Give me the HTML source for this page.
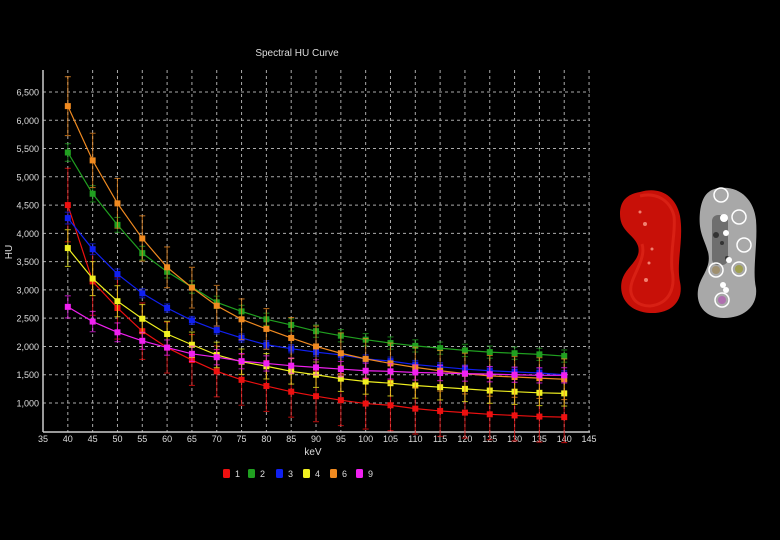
<!DOCTYPE html><html><head><meta charset="utf-8"><style>body{margin:0;background:#000;width:780px;height:540px;overflow:hidden}svg{display:block}text{font-family:"Liberation Sans",sans-serif}</style></head><body>
<svg id="s" width="780" height="540" viewBox="0 0 780 540">
<rect width="780" height="540" fill="#000"/>
<text x="297" y="56" fill="#ddd" font-size="10" text-anchor="middle">Spectral HU Curve</text>
<text x="12" y="252" fill="#ddd" font-size="10" text-anchor="middle" transform="rotate(-90 12 252)">HU</text>
<text x="313" y="455" fill="#ddd" font-size="10" text-anchor="middle">keV</text>
<g id="g"></g>
<path d="M640 192 C660 186 676 196 680 216 C684 240 676 262 680 282 C684 300 672 314 650 313 C628 312 618 296 622 280 C626 266 642 260 638 246 C634 234 620 232 620 214 C620 200 628 194 640 192 Z" fill="#c81008"/>
<path d="M640 196 C656 192 670 200 674 216 C676 232 670 250 672 270 C676 290 668 304 650 306 C634 306 628 294 632 282 C636 270 646 256 642 244" fill="none" stroke="#e83020" stroke-width="3" opacity=".5"/>
<g fill="#f08070"><circle cx="640" cy="212" r="1.5"/><circle cx="645" cy="224" r="2"/><circle cx="652" cy="249" r="1.5"/><circle cx="649" cy="263" r="1.5"/><circle cx="646" cy="280" r="2"/></g>
<path d="M720 188 C740 186 754 200 756 220 C758 244 752 270 756 288 C758 306 744 318 724 318 C704 318 696 304 698 290 C700 276 712 268 708 252 C704 238 698 232 700 212 C702 196 708 189 720 188 Z" fill="#a8a8a8"/>
<g fill="#333"><rect x="712" y="215" width="16" height="50" rx="6" opacity=".5"/><circle cx="716" cy="235" r="3"/><circle cx="722" cy="243" r="2"/><circle cx="727" cy="258" r="2"/></g>
<g fill="#fff"><circle cx="724" cy="218" r="4"/><circle cx="726" cy="233" r="3"/><circle cx="729" cy="260" r="3"/><circle cx="723" cy="285" r="3"/><circle cx="726" cy="290" r="3"/></g>
<g fill="none" stroke="#fff" stroke-width="1.5"><circle cx="721" cy="195" r="7"/><circle cx="739" cy="217" r="7"/><circle cx="744" cy="245" r="7"/><circle cx="716" cy="270" r="7"/><circle cx="739" cy="269" r="7"/><circle cx="722" cy="300" r="7"/></g>
<circle cx="722" cy="300" r="4" fill="#b070b0"/><circle cx="716" cy="270" r="4" fill="#a09070"/><circle cx="739" cy="269" r="4" fill="#a0a050"/>
</svg>
<script>
var g=document.getElementById('g'),h='';
function X(k){return 43+(k-35)*4.964}function Y(v){return 403-(v-1000)*0.05655}
for(var v=1000;v<=6500;v+=500){var y=Y(v);h+='<line x1="43" x2="590" y1="'+y+'" y2="'+y+'" stroke="#aaa" stroke-dasharray="3,3" stroke-width="1"/>';h+='<text x="39" y="'+(y+3.5)+'" fill="#ddd" font-size="9" text-anchor="end">'+(v/1000|0)+','+String(v%1000).padStart(3,'0')+'</text>'}
for(var k=35;k<=145;k+=5){var x=X(k);if(k>35)h+='<line x1="'+x+'" x2="'+x+'" y1="70" y2="432" stroke="#aaa" stroke-dasharray="3,3" stroke-width="1"/>';h+='<text x="'+x+'" y="442" fill="#ddd" font-size="9" text-anchor="middle">'+k+'</text>'}
h+='<line x1="43" x2="43" y1="70" y2="432" stroke="#ccc" stroke-width="1.5"/><line x1="43" x2="590" y1="432" y2="432" stroke="#ccc" stroke-width="1.5"/>';
var D=[['#ee1010',[4500,3150,2680,2270,1980,1760,1560,1410,1300,1200,1120,1050,990,960,900,860,830,800,780,760,750],500],
['#20a020',[5430,4700,4150,3650,3320,3050,2780,2620,2480,2380,2270,2190,2120,2060,2010,1970,1930,1900,1880,1860,1830],120],
['#1020f0',[4270,3720,3280,2940,2680,2460,2290,2150,2030,1960,1900,1850,1780,1740,1680,1640,1600,1570,1550,1530,1500],80],
['#f0f020',[3740,3200,2800,2490,2220,2030,1850,1730,1650,1560,1500,1430,1380,1350,1310,1280,1250,1220,1200,1180,1170],250],
['#f08a20',[6250,5290,4530,3910,3400,3040,2720,2480,2310,2150,2000,1880,1780,1700,1630,1570,1520,1480,1460,1440,1420],400],
['#f020f0',[2700,2440,2250,2100,1980,1870,1810,1740,1700,1660,1630,1600,1570,1560,1540,1530,1520,1510,1500,1490,1490],150]];
D.forEach(function(d){var p='',e='',m='';d[1].forEach(function(v,i){var x=X(40+5*i),y=Y(v),r=d[2]*(i<4?(1.3-i*0.1):0.9)*0.05655;p+=(i?'L':'M')+x+' '+y;e+='M'+x+' '+(y-r)+'V'+(y+r)+'M'+(x-3)+' '+(y-r)+'h6M'+(x-3)+' '+(y+r)+'h6';m+='<rect x="'+(x-3)+'" y="'+(y-3)+'" width="6" height="6" fill="'+d[0]+'"/>'});
h+='<path d="'+e+'" stroke="'+d[0]+'" stroke-width="1.1" fill="none" opacity=".7"/><path d="'+p+'" stroke="'+d[0]+'" stroke-width="1.2" fill="none"/>'+m});
var L=[[226,'#ee1010','1'],[251,'#20a020','2'],[279,'#1020f0','3'],[306,'#f0f020','4'],[333,'#f08a20','6'],[359,'#f020f0','9']];
L.forEach(function(l){h+='<rect x="'+(l[0]-3)+'" y="469" width="7" height="9" rx="1.5" fill="'+l[1]+'"/><text x="'+(l[0]+9)+'" y="477" fill="#ddd" font-size="9">'+l[2]+'</text>'});
g.innerHTML=h;
</script>
</body></html>
